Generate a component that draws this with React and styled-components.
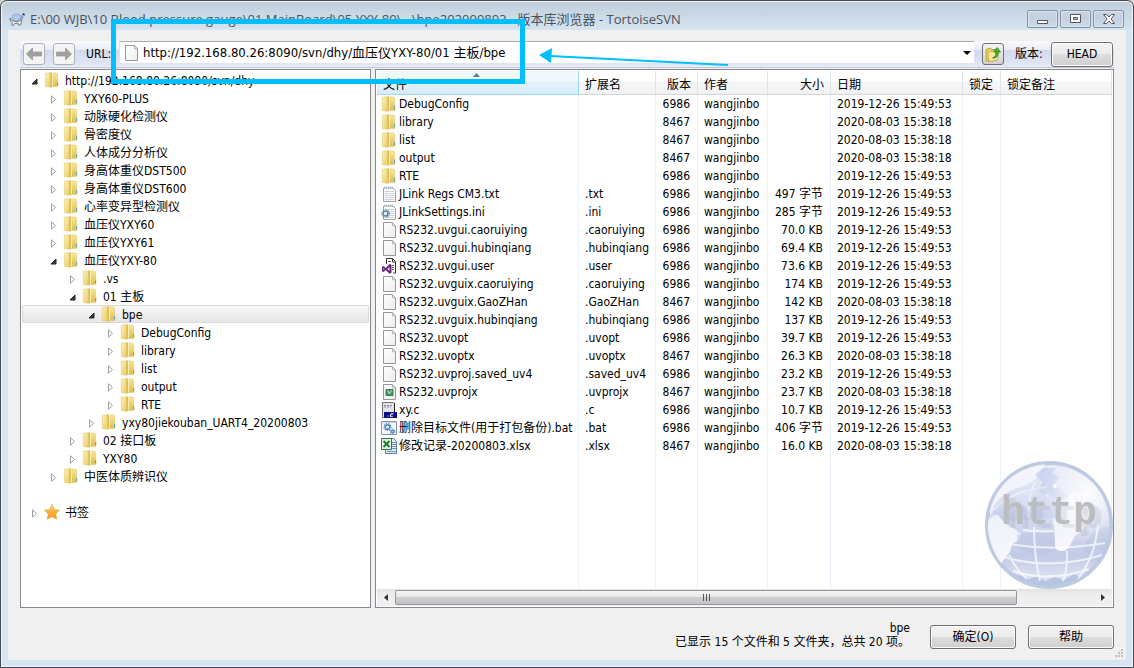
import React from "react";
import styled, { createGlobalStyle, css } from "styled-components";

const GlobalStyle = createGlobalStyle`
  * { box-sizing: border-box; }
  html, body, #root { height: 100%; }
  body {
    margin: 0;
    background: #d0d0d0;
    color: #000;
    font: 12px/18px "DejaVu Sans Condensed", "Noto Sans CJK SC", sans-serif;
  }
  button, input { font: inherit; color: inherit; }
`;

const Window = styled.div`
  position: relative;
  display: flex;
  flex-direction: column;
  height: 100%;
  min-height: 480px;
  padding: 0 6px 6px;
  border: 1px solid #48464e;
  border-radius: 7px 7px 0 0;
  background: linear-gradient(#c0cddb, #d7e4f2 30px, #d7e4f2);
  box-shadow: inset 0 0 0 1px #f2f6fa;
`;

const TitleBar = styled.header`
  display: flex;
  align-items: center;
  height: 29px;
  padding: 6px 3px 0 2px;
  gap: 5px;
`;

const Title = styled.h1`
  flex: 1;
  margin: 0;
  overflow: hidden;
  white-space: nowrap;
  color: #4a525c;
  font: 13px/20px "Open Sans", "Noto Sans CJK SC", sans-serif;
`;

const WindowButtons = styled.div`
  display: flex;
  gap: 2px;
`;

const WindowButton = styled.button`
  display: grid;
  place-items: center;
  width: 31px;
  height: 18px;
  padding: 0;
  border: 1px solid #8793a4;
  border-radius: 2px;
  background: linear-gradient(#c9d5e2, #c3d0df 50%, #d0dceb);
  box-shadow: inset 0 0 0 1px #dbe4ee;
`;

const Client = styled.main`
  display: flex;
  flex-direction: column;
  flex: 1;
  min-height: 0;
  margin: 0 1px 1px;
  padding: 11px 12px 0;
  background: #f0f0f0;
`;

const Toolbar = styled.div`
  display: flex;
  align-items: center;
  height: 27px;
  padding: 0 1px 0 3px;
  border-bottom: 1px solid #c4c8d2;
  background: linear-gradient(#fafbfd, #e9ecf7 9px, #d2d9ee 9px, #e2e7f6 25px, #f2f4fa);
`;

const ToolButton = styled.button`
  display: grid;
  place-items: center;
  width: 22px;
  height: 22px;
  padding: 0;
  border: 1px solid ${(p) => (p.$active ? "#707070" : "#adb2b5")};
  border-radius: 3px;
  background: ${(p) => (p.$active ? "linear-gradient(#f4f4f4, #e4e4e4 50%, #cfcfcf)" : "#f4f4f4")};
  margin-right: 8px;
`;

const UrlLabel = styled.label`
  width: 33px;
  margin-left: 3px;
`;

const ComboBox = styled.div`
  display: flex;
  align-items: center;
  align-self: flex-start;
  flex: 1;
  height: 22px;
  margin-right: 8px;
  padding: 0 3px;
  gap: 4px;
  border-top: 1px solid #abadb3;
  border-left: 1px solid #e2e3ea;
  background: #fff;
`;

const UrlInput = styled.input`
  flex: 1;
  min-width: 0;
  padding: 0;
  border: 0;
  outline: 0;
  background: transparent;
  font-size: 13px;
`;

const DropButton = styled.button`
  display: grid;
  place-items: center;
  padding: 0;
  border: 0;
  background: transparent;
`;

const RevisionLabel = styled.label`
  width: 36px;
  margin-left: 3px;
`;

const PushButton = styled.button`
  min-width: ${(p) => (p.$small ? "62px" : "86px")};
  height: ${(p) => (p.$small ? "25px" : "24px")};
  padding: 0 8px;
  border: 1px solid #707070;
  border-radius: 3px;
  background: linear-gradient(#f3f3f3, #ebebeb 50%, #dddddd 50%, #cfcfcf);
  box-shadow: inset 0 0 0 1px #fbfbfb;
`;

const Panes = styled.div`
  display: flex;
  flex: 1;
  min-height: 0;
  gap: 4px;
  margin-top: 1px;
`;

const pane = css`
  border: 1px solid #828790;
  background: #fff;
  overflow: hidden;
`;

const TreePane = styled.nav`
  ${pane}
  flex: 0 0 351px;
  padding: 1px;
`;

const Tree = styled.ul`
  margin: 0;
  padding: 0;
  list-style: none;
`;

const TreeRow = styled.li`
  display: flex;
  align-items: center;
  height: 18px;
  margin-top: ${(p) => (p.$spaced ? "18px" : "0")};
  padding-left: ${(p) => 8 + p.$level * 19}px;
  white-space: nowrap;
  ${(p) =>
    p.$selected &&
    css`
      border-radius: 2px;
      background: linear-gradient(#fafafa, #e5e5e5);
      box-shadow: inset 0 0 0 1px #d9d9d9;
    `}
`;

const Toggle = styled.button`
  display: grid;
  place-items: center;
  width: 9px;
  height: 16px;
  margin-right: 5px;
  padding: 2px 0 0;
  border: 0;
  background: transparent;
`;

const TreeLabel = styled.span`
  margin-left: 5px;
  padding-top: 2px;
`;

const ListPane = styled.section`
  ${pane}
  position: relative;
  display: flex;
  flex-direction: column;
  flex: 1;
  min-width: 0;
  padding: 1px;
`;

const TableArea = styled.div`
  flex: 1;
  min-height: 0;
  overflow: hidden;
`;

const Table = styled.table`
  width: 100%;
  height: 100%;
  table-layout: fixed;
  border-collapse: separate;
  border-spacing: 0;
`;

const Col = styled.col`
  width: ${(p) => (p.$width ? `${p.$width}px` : "auto")};
`;

const HeadCell = styled.th`
  position: relative;
  height: 24px;
  padding: 6px 6px 0;
  border-right: 1px solid #e0e3e8;
  border-bottom: 1px solid #d5d5d5;
  background: linear-gradient(#ffffff, #ffffff 10px, #f5f6f8 11px, #f1f2f4);
  font-weight: normal;
  line-height: 17px;
  text-align: ${(p) => (p.$right ? "right" : "left")};
  white-space: nowrap;
  ${(p) =>
    p.$sorted &&
    css`
      border-color: #96d9f9;
      background: linear-gradient(#f2f9fc, #f2f9fc 10px, #e1f1f9 11px, #d8ecf6);
    `}
`;

const SortMark = styled.svg`
  position: absolute;
  top: 2px;
  left: 48%;
`;

const Cell = styled.td`
  height: 18px;
  padding: 1px 7px 0 6px;
  border-right: 1px solid #e8f1fb;
  line-height: 17px;
  text-align: ${(p) => (p.$right ? "right" : "left")};
  white-space: nowrap;
`;

const FirstCell = styled(Cell)`
  padding: 0 0 0 4px;
`;

const FileName = styled.span`
  display: flex;
  align-items: center;
  gap: 2px;
`;

const FileLabel = styled.span`
  padding-top: 1px;
`;

const FillerCell = styled(Cell)`
  height: auto;
`;

const Watermark = styled.svg`
  position: absolute;
  right: 0;
  bottom: 18px;
`;

const Scheme = styled.text`
  fill: #bcbdc0;
  font: bold 40px "Liberation Mono", monospace;
  text-shadow: 6px 4px 1px rgba(150, 155, 170, 0.2);
`;

const ScrollBar = styled.div`
  display: flex;
  height: 17px;
  background: linear-gradient(#e3e3e3, #eeeeee 6px, #f0f0f0);
`;

const ScrollArrow = styled.button`
  display: grid;
  place-items: center;
  width: 18px;
  padding: 0;
  border: 0;
  background: transparent;
`;

const ScrollTrack = styled.div`
  flex: 1;
  padding: 1px 0;
`;

const ScrollThumb = styled.div`
  display: grid;
  place-items: center;
  width: 89%;
  height: 15px;
  border: 1px solid #979797;
  border-radius: 2px;
  background: linear-gradient(#f5f5f5, #e6e6e7 6px, #cfcfd1 6px, #c2c3c7);
`;

const Footer = styled.footer`
  display: flex;
  align-items: flex-start;
  justify-content: flex-end;
  height: 52px;
  padding-top: 17px;
  gap: 12px;
`;

const Status = styled.div`
  margin: -4px 8px 0 0;
  line-height: 14px;
  text-align: right;
`;

const StatusLine = styled.p`
  margin: 0;
`;

const Grip = styled.svg`
  position: absolute;
  right: 9px;
  bottom: 8px;
`;

const Highlight = styled.div`
  position: absolute;
  top: 18px;
  left: 110px;
  width: 414px;
  height: 65px;
  border: 5px solid #00bfff;
  pointer-events: none;
`;

const Pointer = styled.svg`
  position: absolute;
  top: 46px;
  left: 537px;
  pointer-events: none;
`;

/* Icons */

const FolderIcon = () => (
  <svg width="16" height="16" viewBox="0 0 16 16" aria-hidden="true">
    <defs>
      <linearGradient id="folderFront" x1="0" y1="0" x2="1" y2="1">
        <stop offset="0" stopColor="#fff3b8" />
        <stop offset="1" stopColor="#e8ca62" />
      </linearGradient>
      <linearGradient id="folderBack" x1="0" y1="0" x2="0" y2="1">
        <stop offset="0" stopColor="#f7e69c" />
        <stop offset="1" stopColor="#dfbd50" />
      </linearGradient>
    </defs>
    <path d="M6 1h6.500l1 1v6l.5 1v5l-.5.500H6z" fill="url(#folderBack)" stroke="#e3c768" strokeWidth=".6" />
    <path d="M13 10.500h1V13h-1z" fill="#3f9fe0" />
    <path d="M1.300 1.300 6.500.7v14.600l-5.200-.8z" fill="url(#folderFront)" stroke="#e3ca6c" strokeWidth=".6" />
    <path d="M6.500.7H8v13.800l-1 1h-.5z" fill="#dcbd58" />
    <path d="M8 .9h1v13H8z" fill="#fbf0b4" />
  </svg>
);

const Page = ({ children }) => (
  <svg width="16" height="16" viewBox="0 0 16 16" aria-hidden="true">
    <defs>
      <linearGradient id="paper" x1="0" y1="0" x2="1" y2="1">
        <stop offset="0" stopColor="#ffffff" />
        <stop offset="1" stopColor="#ededed" />
      </linearGradient>
    </defs>
    <path d="M2.500.5h9l3 3v12h-12z" fill="url(#paper)" stroke="#979797" />
    <path d="M11.500.8v3h3" fill="#e9e9e9" stroke="#a6a6a6" strokeWidth=".8" />
    {children}
  </svg>
);

const NotePage = ({ children }) => (
  <svg width="16" height="16" viewBox="0 0 16 16" aria-hidden="true">
    <path d="M2.500 2h9.500l2.500 2.500v11h-12z" fill="#fbfcfd" stroke="#9da3a9" />
    <path d="M3 1.500h9" stroke="#b2b7bc" strokeDasharray="1 1" strokeWidth="2" />
    <path d="M4 5.500h9M4 7.500h9M4 9.500h9M4 11.500h9M4 13.500h9" stroke="#c6d1da" />
    {children}
  </svg>
);

const Gear = ({ cx, cy, r, color }) => (
  <g fill="none" stroke={color}>
    <circle cx={cx} cy={cy} r={r} strokeWidth="1.500" />
    <circle cx={cx} cy={cy} r={r + 1.2} strokeWidth="1.200" strokeDasharray="1.200 1.200" />
  </g>
);

const VsIcon = () => (
  <svg width="16" height="16" viewBox="0 0 16 16" aria-hidden="true">
    <path d="M5.500 6V.5h6l3 3v11.500H12" fill="#fff" stroke="#333" />
    <path d="M11.500 1v3h3" fill="none" stroke="#333" />
    <path d="M7 3.500h3M11 7.500h2M11 9.500h2M11 11.500h2" stroke="#555" />
    <path
      d="M2.500 8 4.800 10 8.500 6l2 .8v8l-2 1L4.800 12 2.500 14l-1.500-.8V8.800zM8.500 9 6.400 11l2.100 2zM2.500 10v2l1.100-1z"
      fill="#68217a"
      fillRule="evenodd"
    />
  </svg>
);

const SourceIcon = () => (
  <svg width="16" height="16" viewBox="0 0 16 16" aria-hidden="true">
    <path d="M1.500.5h11l1 1v14h-12z" fill="#e2e4ea" stroke="#6b6f7a" />
    <path d="M3 3.500h8M3 5h7" stroke="#8b8e96" strokeDasharray="2 1" />
    <path d="M13.500 1v10" stroke="#222" />
    <path d="M3 10h13v6H3z" fill="#0a0f82" />
    <path d="M12.500 11.800h-2.500l-.8 2.500h2.600" fill="none" stroke="#fff" />
    <path d="M6.500 14h1" stroke="#fff" />
  </svg>
);

const BatchIcon = () => (
  <svg width="16" height="16" viewBox="0 0 16 16" aria-hidden="true">
    <path d="M.5 1.500h15v13H.5z" fill="#f3f6fa" stroke="#8b97a5" />
    <path d="M1 2.500h14" stroke="#c8d2dd" />
    <Gear cx={6.5} cy={7} r={2.3} color="#4f87bd" />
    <Gear cx={11.5} cy={11.5} r={1.2} color="#5f97c4" />
  </svg>
);

const ExcelIcon = () => (
  <svg width="16" height="16" viewBox="0 0 16 16" aria-hidden="true">
    <path d="M4.500.5h8l3 3v12h-11z" fill="#e3edf8" stroke="#5f7fb4" />
    <path d="M11 4.500h4M11 6.500h4M11 8.500h4M11 10.500h4M6 13.500h9" stroke="#6f93c8" />
    <path d="M.5.5h10v11H.5z" fill="#e4f3df" stroke="#2a7d35" />
    <path d="m2.500 3 6 6M8.500 3l-6 6" stroke="#1f7a2d" strokeWidth="2" />
  </svg>
);

const FileIcon = ({ kind }) => {
  if (kind === "folder") return <FolderIcon />;
  if (kind === "txt") return <NotePage />;
  if (kind === "ini")
    return (
      <NotePage>
        <Gear cx={4.5} cy={9.5} r={2.5} color="#5d89a8" />
      </NotePage>
    );
  if (kind === "vs") return <VsIcon />;
  if (kind === "proj")
    return (
      <Page>
        <path d="M5 5.500h7v6H5z" fill="#4d9467" stroke="#3a7d54" />
        <path d="m6.500 6.500 2 3 2-3" fill="none" stroke="#e3f3e8" />
      </Page>
    );
  if (kind === "c") return <SourceIcon />;
  if (kind === "bat") return <BatchIcon />;
  if (kind === "xls") return <ExcelIcon />;
  return <Page />;
};

const StarIcon = () => (
  <svg width="16" height="16" viewBox="0 0 16 16" aria-hidden="true">
    <defs>
      <linearGradient id="star" x1="0" y1="0" x2="0" y2="1">
        <stop offset="0" stopColor="#ffd777" />
        <stop offset="1" stopColor="#fb8c0c" />
      </linearGradient>
    </defs>
    <path
      d="m8 .6 2.300 5 5.300.6-3.900 3.700 1 5.300L8 12.600l-4.700 2.600 1-5.300L.4 6.200l5.300-.6z"
      fill="url(#star)"
      stroke="#e8a33c"
      strokeWidth=".7"
    />
  </svg>
);

const Arrow = ({ open }) => (
  <svg width="9" height="9" viewBox="0 0 9 9" aria-hidden="true">
    {open ? (
      <path d="M7 2v5H2z" fill="#3a3a3a" stroke="#262626" />
    ) : (
      <path d="M2.500.8v7.400L6.500 4.500z" fill="#fff" stroke="#a0a0a0" />
    )}
  </svg>
);

const TurtleIcon = () => (
  <svg width="16" height="16" viewBox="0 0 16 16" aria-hidden="true">
    <ellipse cx="7.500" cy="6.500" rx="4.500" ry="3.500" fill="#a9c1f3" stroke="#8299c8" strokeWidth=".7" />
    <path d="m5 5.500 2.500 1.500L7 9.500M7.500 7 10.500 5.500" fill="none" stroke="#c7d7fa" strokeWidth=".8" />
    <path d="M12 8.500 13 4l1.500-1.500L15.500 4 14 5.500 12.500 10z" fill="#e8eef5" stroke="#68737f" strokeWidth=".7" />
    <path d="M13.500 2.500h2v2h-1z" fill="#10305a" />
    <path d="M.8 7 3 9.500l4 1.200 4.500-1.200 1 1.500-1 3H9.500L9 12l-3.500.5-1 2-1.800-.5.600-2.500L1.500 10z" fill="#f1f4f6" stroke="#59616a" strokeWidth=".8" />
  </svg>
);

const BigArrow = ({ forward }) => (
  <svg width="18" height="16" viewBox="0 0 18 16" aria-hidden="true">
    <path
      d={forward ? "M16.500 8 10.500 2v4H1.500v4h9v4z" : "M1.500 8l6-6v4h9v4h-9v4z"}
      fill="#a0a0a0"
      stroke="#999"
      strokeWidth=".8"
    />
  </svg>
);

const UpFolderIcon = () => (
  <svg width="16" height="16" viewBox="0 0 16 16" aria-hidden="true">
    <path d="M1 3.500 5.500 2 7 3.500h5V14l-8 1.500-3-1z" fill="#e9ca5b" stroke="#b8942c" strokeWidth=".8" />
    <path d="m3 6 9-1 2 .5L12.500 14 4 15.500z" fill="#f8e99c" stroke="#c4a33d" strokeWidth=".7" />
    <path d="M7.500 12c3-1 3.500-3 3.200-6H8.500L12 1.500 15.500 6h-2.300c0 4-1.500 6.500-5.700 6z" fill="#3fb52f" stroke="#218016" strokeWidth=".7" />
  </svg>
);

const Globe = () => (
  <Watermark width="128" height="128" viewBox="0 0 128 128" aria-hidden="true">
    <defs>
      <linearGradient id="sea" x1="0" y1="0" x2="0" y2="1">
        <stop offset="0" stopColor="#e6eaf7" />
        <stop offset=".6" stopColor="#cdd4ec" />
        <stop offset=".75" stopColor="#c3cae6" />
        <stop offset="1" stopColor="#e6eaf7" />
      </linearGradient>
      <linearGradient id="land" x1="0" y1="0" x2="0" y2="1">
        <stop offset="0" stopColor="#eef1f9" />
        <stop offset="1" stopColor="#f8f9fd" />
      </linearGradient>
      <radialGradient id="shine" cx=".82" cy=".25" r=".4">
        <stop offset="0" stopColor="#fff" stopOpacity=".95" />
        <stop offset="1" stopColor="#fff" stopOpacity="0" />
      </radialGradient>
      <radialGradient id="atlantic" cx=".5" cy=".2" r=".9">
        <stop offset="0" stopColor="#dfe5f5" />
        <stop offset="1" stopColor="#c3cdea" />
      </radialGradient>
      <clipPath id="disc">
        <circle cx="64" cy="64" r="61" />
      </clipPath>
    </defs>
    <circle cx="64" cy="64" r="62" fill="url(#sea)" stroke="#bdcae1" strokeWidth="4" />
    <g clipPath="url(#disc)">
      <path d="M4 50C10 24 32 6 60 3c-2 12-14 20-28 24C18 32 8 42 6 54z" fill="#f7f8fd" opacity=".8" />
      <path d="M8 52C15 38 25 30 42 25l14 2 6 9 10 6-2 14-42 4-12-2z" fill="url(#atlantic)" />
      <path d="m50 14 8-7 13 0-4 5 8 4-5 6 4 6 8 6-6 4-9-1-4-5-5 2-4-6 4-7z" fill="#c6d0ec" opacity=".8" />
      <circle cx="70" cy="25" r="2" fill="#fff" />
      <path d="M70 42l12-4 6-8 8 3-4 12 14 14-12 2-24-4z" fill="#f2f4fa" opacity=".9" />
      <path d="m90 34 5 7 8 8-4 1-8-6z" fill="#c0ccea" opacity=".7" />
      <path d="M2 60c4-4 7-6 11-6l6 8 9 5 8 6-2 6-7 4-2 8-8 10-4 8C6 94 2 78 2 60z" fill="url(#land)" />
      <path d="M32 74c12-4 24-2 38-2l4 16-18 6-24-6z" fill="#b9c2e2" opacity=".5" />
      <path d="M68 58c8-3 18-5 26-3l8 7-4 7-8 6-5 9c-3 6-6 6-9 6-5 0-6-4-6-8l-1-16z" fill="url(#land)" />
      <path d="m98 91 3-11 8-9 13-6 4 4-6 22-8-4-6 6z" fill="#bdc8e5" opacity=".8" />
      <path d="M26 112c6 4 11 0 18 6l8-3 8 5 10-4 9 3 10-6 7 4-12 13H46z" fill="#b7c5e2" />
      <g fill="none" stroke="#fff" strokeWidth="2" opacity=".7">
        <path d="M38 69q15 2 30 1M25 83q44 8 95-1M19 96q46 14 98-2M28 110q36 12 76-2" />
        <path d="M49 66q0 28 6 54M82 90q1 16-4 30M113 62q-2 32-20 56M24 94q8 16 18 24" />
        <path d="M50 20q-8 22-7 36M8 50q16-20 54-24" opacity=".6" />
      </g>
      <circle cx="64" cy="64" r="61" fill="url(#shine)" />
    </g>
    <Scheme x="16" y="63">http</Scheme>
  </Watermark>
);

/* Data */

const tree = [
  { level: 0, name: "http://192.168.80.26:8090/svn/dhy", open: true },
  { level: 1, name: "YXY60-PLUS" },
  { level: 1, name: "动脉硬化检测仪" },
  { level: 1, name: "骨密度仪" },
  { level: 1, name: "人体成分分析仪" },
  { level: 1, name: "身高体重仪DST500" },
  { level: 1, name: "身高体重仪DST600" },
  { level: 1, name: "心率变异型检测仪" },
  { level: 1, name: "血压仪YXY60" },
  { level: 1, name: "血压仪YXY61" },
  { level: 1, name: "血压仪YXY-80", open: true },
  { level: 2, name: ".vs" },
  { level: 2, name: "01 主板", open: true },
  { level: 3, name: "bpe", open: true, selected: true },
  { level: 4, name: "DebugConfig" },
  { level: 4, name: "library" },
  { level: 4, name: "list" },
  { level: 4, name: "output" },
  { level: 4, name: "RTE" },
  { level: 3, name: "yxy80jiekouban_UART4_20200803" },
  { level: 2, name: "02 接口板" },
  { level: 2, name: "YXY80" },
  { level: 1, name: "中医体质辨识仪" },
  { level: 0, name: "书签", star: true },
];

const columns = [
  { title: "文件", width: 202, sorted: true },
  { title: "扩展名", width: 77 },
  { title: "版本", width: 42, right: true },
  { title: "作者", width: 70 },
  { title: "大小", width: 63, right: true },
  { title: "日期", width: 132 },
  { title: "锁定", width: 38 },
  { title: "锁定备注" },
];

const OLD = "2019-12-26 15:49:53";
const NEW = "2020-08-03 15:38:18";

const files = [
  ["folder", "DebugConfig", "", 6986, ""],
  ["folder", "library", "", 8467, ""],
  ["folder", "list", "", 8467, ""],
  ["folder", "output", "", 8467, ""],
  ["folder", "RTE", "", 6986, ""],
  ["txt", "JLink Regs CM3.txt", ".txt", 6986, "497 字节"],
  ["ini", "JLinkSettings.ini", ".ini", 6986, "285 字节"],
  ["page", "RS232.uvgui.caoruiying", ".caoruiying", 6986, "70.0 KB"],
  ["page", "RS232.uvgui.hubinqiang", ".hubinqiang", 6986, "69.4 KB"],
  ["vs", "RS232.uvgui.user", ".user", 6986, "73.6 KB"],
  ["page", "RS232.uvguix.caoruiying", ".caoruiying", 6986, "174 KB"],
  ["page", "RS232.uvguix.GaoZHan", ".GaoZHan", 8467, "142 KB"],
  ["page", "RS232.uvguix.hubinqiang", ".hubinqiang", 6986, "137 KB"],
  ["page", "RS232.uvopt", ".uvopt", 6986, "39.7 KB"],
  ["page", "RS232.uvoptx", ".uvoptx", 8467, "26.3 KB"],
  ["page", "RS232.uvproj.saved_uv4", ".saved_uv4", 6986, "23.2 KB"],
  ["proj", "RS232.uvprojx", ".uvprojx", 8467, "23.7 KB"],
  ["c", "xy.c", ".c", 6986, "10.7 KB"],
  ["bat", "删除目标文件(用于打包备份).bat", ".bat", 6986, "406 字节"],
  ["xls", "修改记录-20200803.xlsx", ".xlsx", 8467, "16.0 KB"],
];

const FileTable = () => (
  <Table>
    <colgroup>
      {columns.map((c) => (
        <Col key={c.title} $width={c.width} />
      ))}
    </colgroup>
    <thead>
      <tr>
        {columns.map((c) => (
          <HeadCell key={c.title} scope="col" $right={c.right} $sorted={c.sorted}>
            {c.title}
            {c.sorted && (
              <SortMark width="7" height="4" viewBox="0 0 7 4" aria-hidden="true">
                <path d="M0 4 3.500 0 7 4z" fill="#4f7d99" />
              </SortMark>
            )}
          </HeadCell>
        ))}
      </tr>
    </thead>
    <tbody>
      {files.map(([kind, name, ext, revision, size]) => (
        <tr key={name}>
          <FirstCell>
            <FileName>
              <FileIcon kind={kind} />
              <FileLabel>{name}</FileLabel>
            </FileName>
          </FirstCell>
          <Cell>{ext}</Cell>
          <Cell $right>{revision}</Cell>
          <Cell>wangjinbo</Cell>
          <Cell $right>{size}</Cell>
          <Cell>{revision === 6986 ? OLD : NEW}</Cell>
          <Cell />
          <Cell />
        </tr>
      ))}
      <tr>
        {columns.map((c) => (
          <FillerCell key={c.title} />
        ))}
      </tr>
    </tbody>
  </Table>
);

export default function App() {
  return (
    <>
      <GlobalStyle />
      <Window>
        <TitleBar>
          <TurtleIcon />
          <Title>
            E:\00 WJB\10 Blood pressure gauge\01 MainBoard\05 YXY-80\...\bpe202000803 - 版本库浏览器 - TortoiseSVN
          </Title>
          <WindowButtons>
            <WindowButton aria-label="最小化">
              <svg width="13" height="12" viewBox="0 0 13 12">
                <path d="M1.500 7.500h10v3h-10z" fill="#fff" stroke="#535666" />
              </svg>
            </WindowButton>
            <WindowButton aria-label="最大化">
              <svg width="13" height="12" viewBox="0 0 13 12">
                <path d="M1.500 1.500h10v8h-10zM4.500 4.500h4v2h-4z" fill="#fff" fillRule="evenodd" stroke="#535666" />
              </svg>
            </WindowButton>
            <WindowButton aria-label="关闭">
              <svg width="12" height="12" viewBox="0 0 12 12">
                <path d="M.5 1.500h3L6 4l2.500-2.500h3L8 6l3.500 4.500h-3L6 8l-2.500 2.500h-3L4 6z" fill="#fff" stroke="#535666" />
              </svg>
            </WindowButton>
          </WindowButtons>
        </TitleBar>

        <Client>
          <Toolbar>
            <ToolButton aria-label="后退">
              <BigArrow />
            </ToolButton>
            <ToolButton aria-label="前进">
              <BigArrow forward />
            </ToolButton>
            <UrlLabel htmlFor="url">URL:</UrlLabel>
            <ComboBox>
              <Page />
              <UrlInput id="url" defaultValue="http://192.168.80.26:8090/svn/dhy/血压仪YXY-80/01 主板/bpe" />
              <DropButton aria-label="历史地址">
                <svg width="8" height="4" viewBox="0 0 8 4">
                  <path d="M0 0h8L4 4z" />
                </svg>
              </DropButton>
            </ComboBox>
            <ToolButton $active aria-label="上一级">
              <UpFolderIcon />
            </ToolButton>
            <RevisionLabel htmlFor="revision">版本:</RevisionLabel>
            <PushButton id="revision" $small>
              HEAD
            </PushButton>
          </Toolbar>

          <Panes>
            <TreePane aria-label="版本库">
              <Tree>
                {tree.map((node) => (
                  <TreeRow key={node.name + node.level} $level={node.level} $selected={node.selected} $spaced={node.star}>
                    <Toggle aria-label={node.name}>
                      <Arrow open={node.open} />
                    </Toggle>
                    {node.star ? <StarIcon /> : <FolderIcon />}
                    <TreeLabel>{node.name}</TreeLabel>
                  </TreeRow>
                ))}
              </Tree>
            </TreePane>

            <ListPane>
              <TableArea>
                <FileTable />
              </TableArea>
              <ScrollBar>
                <ScrollArrow aria-label="向左滚动">
                  <svg width="4" height="7" viewBox="0 0 4 7">
                    <path d="M4 0v7L0 3.500z" fill="#333" />
                  </svg>
                </ScrollArrow>
                <ScrollTrack>
                  <ScrollThumb>
                    <svg width="9" height="7" viewBox="0 0 9 7" aria-hidden="true">
                      <path d="M1.500 0v7M4.500 0v7M7.500 0v7" stroke="#55565a" strokeWidth="1" />
                    </svg>
                  </ScrollThumb>
                </ScrollTrack>
                <ScrollArrow aria-label="向右滚动">
                  <svg width="4" height="7" viewBox="0 0 4 7">
                    <path d="M0 0v7l4-3.500z" fill="#333" />
                  </svg>
                </ScrollArrow>
              </ScrollBar>
              <Globe />
            </ListPane>
          </Panes>

          <Footer>
            <Status>
              <StatusLine>bpe</StatusLine>
              <StatusLine>已显示 15 个文件和 5 文件夹，总共 20 项。</StatusLine>
            </Status>
            <PushButton>确定(O)</PushButton>
            <PushButton>帮助</PushButton>
          </Footer>
        </Client>

        <Grip width="10" height="10" viewBox="0 0 10 10" aria-hidden="true">
          <path d="M7 0h2v2H7zM4 3h2v2H4zM7 3h2v2H7zM1 6h2v2H1zM4 6h2v2H4zM7 6h2v2H7z" fill="#bfbfbf" />
        </Grip>
        <Highlight />
        <Pointer width="192" height="22" viewBox="0 0 192 22" aria-hidden="true">
          <path d="M12 9 190 18" stroke="#00bfff" strokeWidth="2" />
          <path d="M1 8 14 1l-1 15z" fill="#00bfff" />
        </Pointer>
      </Window>
    </>
  );
}
